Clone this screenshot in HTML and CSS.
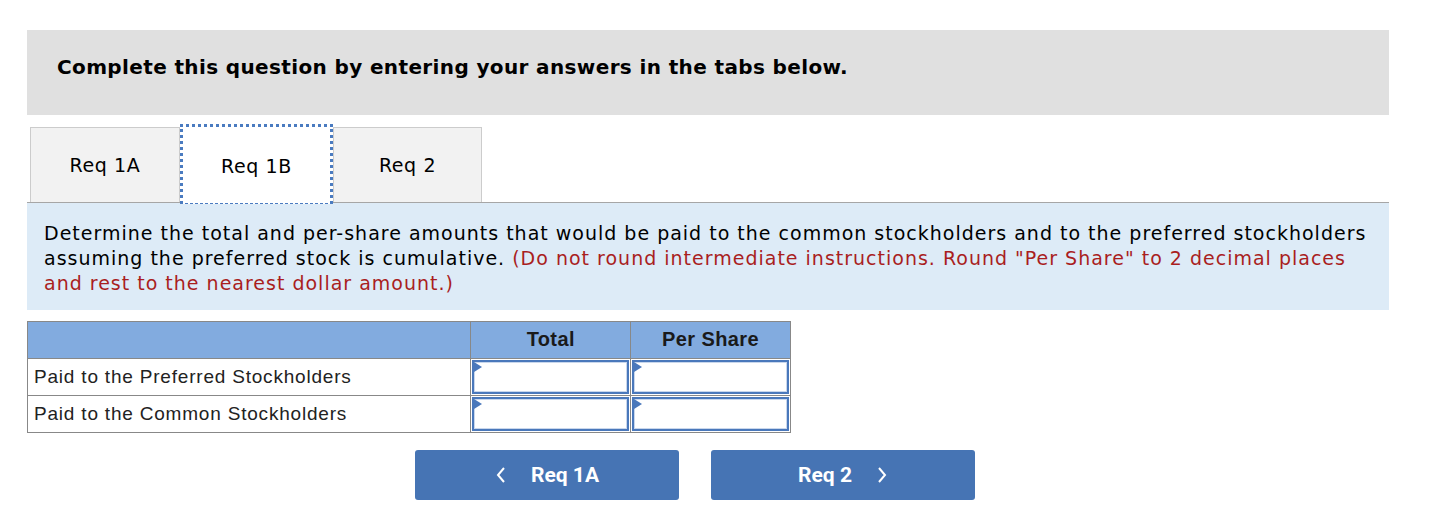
FILE: index.html
```html
<!DOCTYPE html>
<html>
<head>
<meta charset="utf-8">
<link rel="stylesheet" href="styles.css">
</head>
<body>
<div class="page">
  <div class="prompt">Complete this question by entering your answers in the tabs below.</div>
  <div class="tabs">
    <div class="tab">Req 1A</div>
    <div class="tab active">Req 1B</div>
    <div class="tab">Req 2</div>
  </div>
  <div class="info">Determine the total and per-share amounts that would be paid to the common stockholders and to the preferred stockholders assuming the preferred stock is cumulative. <span class="hint">(Do not round intermediate instructions. Round "Per Share" to 2 decimal places and rest to the nearest dollar amount.)</span></div>
  <table class="grid">
    <tr class="head">
      <th class="label"></th>
      <th class="num">Total</th>
      <th class="num">Per Share</th>
    </tr>
    <tr>
      <td class="label">Paid to the Preferred Stockholders</td>
      <td class="cell"><div class="input"></div></td>
      <td class="cell"><div class="input"></div></td>
    </tr>
    <tr>
      <td class="label">Paid to the Common Stockholders</td>
      <td class="cell"><div class="input"></div></td>
      <td class="cell"><div class="input"></div></td>
    </tr>
  </table>
  <div class="nav">
    <div class="btn"><svg class="chev" width="12" height="18" viewBox="0 0 12 18"><polyline points="9,2 3,9 9,16" fill="none" stroke="#fff" stroke-width="2"/></svg><span>Req 1A</span></div>
    <div class="btn"><span>Req 2</span><svg class="chev" width="12" height="18" viewBox="0 0 12 18"><polyline points="3,2 9,9 3,16" fill="none" stroke="#fff" stroke-width="2"/></svg></div>
  </div>
</div>
</body>
</html>
```
FILE: styles.css
```css
* { box-sizing: border-box; }
body { margin: 0; background: #fff; }
.page { padding: 30px 0 0 27px; width: 1389px; }
.prompt {
  background: #e0e0e0;
  height: 85px;
  padding: 24px 0 0 30px;
  font-family: "DejaVu Sans", Verdana, sans-serif;
  font-weight: bold;
  font-size: 20px;
  letter-spacing: 0.37px;
  line-height: 26px;
  color: #000;
}
.tabs {
  margin-top: 12px;
  display: flex;
  padding-left: 3px;
  border-bottom: 1px solid #a6a6a6;
  height: 76px;
}
.tab {
  height: 75px;
  background: #f2f2f2;
  border: 1px solid #cccccc;
  border-bottom: none;
  display: flex;
  align-items: center;
  justify-content: center;
  font-family: "DejaVu Sans", Verdana, sans-serif;
  font-size: 19px;
  letter-spacing: 0.6px;
  color: #000;
}
.tab:nth-child(1) { width: 150px; }
.tab:nth-child(3) { width: 149px; }
.tab.active {
  position: relative;
  width: 153px;
  height: 80px;
  margin-top: -3px;
  background: #fff;
  border-top: 3px dotted #4a7bc0;
  border-left: 3px dotted #4a7bc0;
  border-right: 3px dotted #4a7bc0;
  border-bottom: 1px dashed #4a7bc0;
  padding-top: 2px;
  z-index: 1;
}
.info {
  background: #ddebf7;
  height: 107px;
  padding: 18px 17px 0 17px;
  font-family: "DejaVu Sans", Verdana, sans-serif;
  font-size: 19px;
  letter-spacing: 1px;
  line-height: 25px;
  color: #000;
}
.hint { color: #a91e1e; }
.grid {
  margin-top: 11px;
  border-collapse: collapse;
  width: 764px;
  font-family: "Liberation Sans", Arial, sans-serif;
  border: 1px solid #888;
}
.grid th, .grid td { border: 1px solid #888; padding: 0; }
.head th {
  background: #82abdf;
  height: 37px;
  font-size: 20px;
  letter-spacing: 0.4px;
  font-weight: bold;
  color: #1a1a1a;
  padding-top: 1px;
  vertical-align: top;
  line-height: 33px;
}
.grid th.label, .grid td.label { width: 444px; }
.grid th.num, .grid td.cell { width: 160px; }
.grid td.label {
  height: 37px;
  font-size: 19px;
  letter-spacing: 0.8px;
  color: #222;
  padding-left: 6px;
  padding-top: 0;
}
.grid td.cell { padding: 1px; }
.input {
  position: relative;
  height: 34px;
  border: 2px solid #4a78bb;
  box-shadow: inset 0 0 0 1px #c9d7ec;
  background: #fff;
}
.input::before {
  content: "";
  position: absolute;
  left: 0;
  top: 0;
  border-top: 5px solid transparent;
  border-bottom: 5px solid transparent;
  border-left: 8px solid #4a78bb;
}
.nav {
  margin-top: 17px;
  padding-left: 388px;
  display: flex;
  gap: 32px;
}
.btn {
  width: 264px;
  height: 50px;
  background: #4674b4;
  border-radius: 3px;
  display: flex;
  align-items: center;
  justify-content: center;
  gap: 24px;
  color: #fff;
  font-family: "Roboto", "Liberation Sans", Arial, sans-serif;
  font-weight: bold;
  font-size: 21px;
}
.chev { display: block; }
```
